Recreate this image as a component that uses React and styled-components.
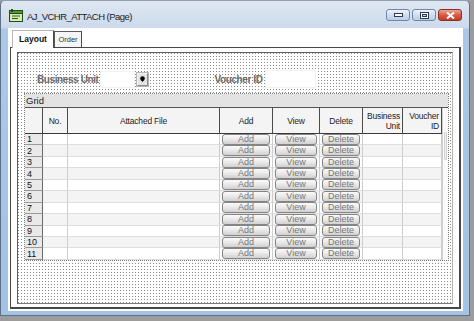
import React from "react";
import styled, { createGlobalStyle } from "styled-components";

const GlobalStyle = createGlobalStyle`
  html, body {
    margin: 0;
    padding: 0;
    background: #9c9c9c;
  }
  body {
    width: 474px;
    height: 321px;
    overflow: hidden;
    font-family: "Liberation Sans", Arial, sans-serif;
  }
`;

const Window = styled.div`
  box-sizing: border-box;
  width: 470px;
  height: 316px;
  display: flex;
  flex-direction: column;
  padding: 0 6px 4px 7px;
  border: 1px solid #5f6f84;
  border-top-color: #8e9db0;
  border-radius: 5px 5px 0 0;
  background: linear-gradient(to bottom, #dfe7f1 0px, #cbdaec 27px, #abc8e7 28px, #a2c3e5 100%);
`;

const TitleBar = styled.div`
  height: 27px;
  display: flex;
  align-items: flex-start;
  flex-shrink: 0;
`;

const AppIcon = styled.svg`
  margin: 8px 0 0 1px;
  flex-shrink: 0;
`;

const Title = styled.div`
  margin: 10px 0 0 4px;
  font-size: 9.5px;
  letter-spacing: -0.55px;
  color: #1b1b1b;
  white-space: nowrap;
`;

const Caption = styled.div`
  margin: 8px 1px 0 auto;
  display: flex;
  gap: 2px;
`;

const CaptionBtn = styled.div`
  box-sizing: border-box;
  width: 24px;
  height: 12px;
  display: flex;
  align-items: center;
  justify-content: center;
  border: 1px solid ${(p) => (p.$close ? "#8e2f22" : "#7186a3")};
  border-radius: 3px;
  background: ${(p) =>
    p.$close
      ? "linear-gradient(#eba596, #d75a47 50%, #c53b28)"
      : "linear-gradient(#edf3fa, #d0ddee 50%, #bccfe6)"};
`;

const Client = styled.div`
  flex: 1;
  display: flex;
  flex-direction: column;
  background: #fff;
  min-height: 0;
`;

const Tabs = styled.div`
  height: 19px;
  display: flex;
  align-items: flex-end;
  padding-left: 4px;
  flex-shrink: 0;
`;

const Tab = styled.div`
  box-sizing: border-box;
  width: ${(p) => p.$w}px;
  height: ${(p) => (p.$active ? "18px" : "16px")};
  margin-bottom: ${(p) => (p.$active ? "-1px" : "0")};
  position: relative;
  z-index: 1;
  display: flex;
  align-items: center;
  justify-content: center;
  border: 1px solid ${(p) => (p.$active ? "#b8b8b8" : "#5a5a5a")};
  border-right-color: #4a4a4a;
  border-bottom: none;
  background: ${(p) => (p.$active ? "#fff" : "#f5f5f5")};
  font-size: ${(p) => (p.$active ? "8.5px" : "7.5px")};
  font-weight: ${(p) => (p.$active ? 700 : 400)};
  color: ${(p) => (p.$active ? "#111" : "#333")};
  padding-bottom: ${(p) => (p.$active ? "2px" : "0")};
`;

const TabPanel = styled.div`
  flex: 1;
  display: flex;
  margin: 0 2px 2px 2px;
  padding: 4px 7px 3px 6px;
  border: 1px solid #474747;
  border-right-width: 2px;
  border-bottom-width: 2px;
  min-height: 0;
`;

const Canvas = styled.div`
  flex: 1;
  display: flex;
  flex-direction: column;
  gap: 5px;
  padding: 17px 3px 0 6px;
  border: 1px solid #5e5e5e;
  border-right-color: #b4b4b4;
  border-bottom-color: #7a7a7a;
  background-color: #8a8a8a;
  background-image: linear-gradient(to right, transparent 0 1px, #fff 1px 3px),
    linear-gradient(to bottom, transparent 0 1px, #fff 1px 3px);
  background-size: 3px 3px;
`;

const FieldRow = styled.div`
  height: 18px;
  display: flex;
  align-items: center;
  padding-left: 13px;
`;

const Label = styled.span`
  font-size: 10px;
  font-weight: 700;
  letter-spacing: -0.4px;
  color: #6a6a6a;
  margin-left: ${(p) => p.$gap || 0}px;
  margin-right: 2px;
  white-space: nowrap;
`;

const Input = styled.div`
  width: ${(p) => p.$w}px;
  height: ${(p) => p.$h}px;
  background: #fff;
  box-shadow: inset 0 0 0 1px #f2f2f2;
`;

const Drop = styled.div`
  box-sizing: border-box;
  width: 11px;
  height: 13px;
  margin-left: 2px;
  display: flex;
  align-items: center;
  justify-content: center;
  background: #e4e4e4;
  border: 1px solid #8a8a8a;
  border-top-color: #f4f4f4;
  border-left-color: #f4f4f4;
  box-shadow: 0 0 0 1px #b5b5b5;
`;

const Grid = styled.div`
  width: 425px;
  box-sizing: border-box;
  border: 1px dotted #7c7c7c;
  background: #fff;
`;

const GridTitle = styled.div`
  height: 13px;
  line-height: 13px;
  padding-left: 1px;
  background: #e3e3e3;
  border-bottom: 1px solid #555;
  font-size: 9.5px;
  color: #1c1c1c;
`;

const Table = styled.div`
  display: grid;
  grid-template-columns: 18px 25px 152px 53px 47px 43px 40px 39px 1fr;
  grid-template-rows: 26px repeat(11, 11.45px);
`;

const Head = styled.div`
  box-sizing: border-box;
  display: flex;
  flex-direction: column;
  justify-content: center;
  align-items: ${(p) => (p.$right ? "flex-end" : "center")};
  padding-right: ${(p) => (p.$right ? "2px" : "0")};
  border-right: 1px solid #4a4a4a;
  border-bottom: 1px solid #3a3a3a;
  background: #f4f4f4;
  font-size: 8.5px;
  letter-spacing: -0.2px;
  line-height: 10px;
  text-align: right;
  color: #1e1e1e;
`;

const RowNum = styled.div`
  box-sizing: border-box;
  display: flex;
  align-items: center;
  padding-left: 2px;
  background: #e9e9e9;
  border-right: 1px solid #6a6a6a;
  border-bottom: 1px solid #9a9a9a;
  font-size: 9px;
  color: #111;
`;

const Cell = styled.div`
  box-sizing: border-box;
  display: flex;
  align-items: center;
  justify-content: center;
  background: ${(p) => (p.$alt ? "#f4f4f4" : "#fff")};
  border-right: 1px solid #cdcdcd;
  border-bottom: 1px solid #dedede;
  min-width: 0;
`;

const RowBtn = styled.div`
  box-sizing: border-box;
  width: 100%;
  height: 11px;
  margin: 0 2px;
  display: flex;
  align-items: center;
  justify-content: center;
  border: 1px solid #858585;
  border-radius: 3px;
  background: linear-gradient(#fbfbfb, #e6e6e6 55%, #d0d0d0);
  font-size: 9px;
  line-height: 9px;
  color: #767676;
`;

const Scroll = styled.div`
  grid-column: 9;
  grid-row: 1 / span 12;
  position: relative;
  border-left: 1px solid #cfcfcf;
  background: #fafafa;
`;

const Thumb = styled.div`
  position: absolute;
  left: 1px;
  right: 1px;
  top: 24px;
  height: 26px;
  border: 1px solid #d2d2d2;
  border-radius: 1px;
  background: #f0f0f0;
`;

const rows = Array.from({ length: 11 }, (_, i) => i + 1);

export default function App() {
  return (
    <>
      <GlobalStyle />
      <Window>
        <TitleBar>
          <AppIcon width="14" height="13" viewBox="0 0 14 13">
            <rect x="0.5" y="1.5" width="13" height="11" fill="#d8ecb0" stroke="#254a1a" />
            <rect x="0.5" y="1.5" width="13" height="3" fill="#4f9a34" stroke="#254a1a" />
            <rect x="3" y="6.5" width="8" height="1" fill="#2c5a20" />
            <rect x="3" y="9" width="6" height="1" fill="#2c5a20" />
            <rect x="2" y="0" width="2" height="3" fill="#254a1a" />
          </AppIcon>
          <Title>AJ_VCHR_ATTACH (Page)</Title>
          <Caption>
            <CaptionBtn>
              <svg width="9" height="4" viewBox="0 0 9 4">
                <rect x="0.5" y="0.5" width="8" height="3" fill="#fff" stroke="#2d3c52" />
              </svg>
            </CaptionBtn>
            <CaptionBtn>
              <svg width="9" height="7" viewBox="0 0 9 7">
                <rect x="0.5" y="0.5" width="8" height="6" fill="#fff" stroke="#2d3c52" />
                <rect x="2.5" y="2.5" width="4" height="2" fill="#c6d6ea" stroke="#2d3c52" />
              </svg>
            </CaptionBtn>
            <CaptionBtn $close>
              <svg width="9" height="7" viewBox="0 0 9 7">
                <path d="M1 0.5 L8 6.5 M8 0.5 L1 6.5" stroke="#fff" strokeWidth="2" />
              </svg>
            </CaptionBtn>
          </Caption>
        </TitleBar>
        <Client>
          <Tabs>
            <Tab $active $w={42}>Layout</Tab>
            <Tab $w={28}>Order</Tab>
          </Tabs>
          <TabPanel>
            <Canvas>
              <FieldRow>
                <Label>Business Unit</Label>
                <Input $w={35} $h={17} />
                <Drop>
                  <svg width="5" height="6" viewBox="0 0 5 6">
                    <circle cx="2.5" cy="2.5" r="2.3" fill="#000" />
                    <path d="M1 4 L2.5 6 L4 4 Z" fill="#000" />
                  </svg>
                </Drop>
                <Label $gap={66}>Voucher ID</Label>
                <Input $w={51} $h={18} />
              </FieldRow>
              <Grid>
                <GridTitle>Grid</GridTitle>
                <Table>
                  <Head />
                  <Head>No.</Head>
                  <Head>Attached File</Head>
                  <Head>Add</Head>
                  <Head>View</Head>
                  <Head>Delete</Head>
                  <Head $right>
                    <span>Business</span>
                    <span>Unit</span>
                  </Head>
                  <Head $right>
                    <span>Voucher</span>
                    <span>ID</span>
                  </Head>
                  <Scroll>
                    <Thumb />
                  </Scroll>
                  {rows.map((n) => {
                    const alt = n % 2 === 0;
                    return (
                      <React.Fragment key={n}>
                        <RowNum>{n}</RowNum>
                        <Cell $alt={alt} />
                        <Cell $alt={alt} />
                        <Cell $alt={alt}>
                          <RowBtn>Add</RowBtn>
                        </Cell>
                        <Cell $alt={alt}>
                          <RowBtn>View</RowBtn>
                        </Cell>
                        <Cell $alt={alt}>
                          <RowBtn>Delete</RowBtn>
                        </Cell>
                        <Cell $alt={alt} />
                        <Cell $alt={alt} />
                      </React.Fragment>
                    );
                  })}
                </Table>
              </Grid>
            </Canvas>
          </TabPanel>
        </Client>
      </Window>
    </>
  );
}
